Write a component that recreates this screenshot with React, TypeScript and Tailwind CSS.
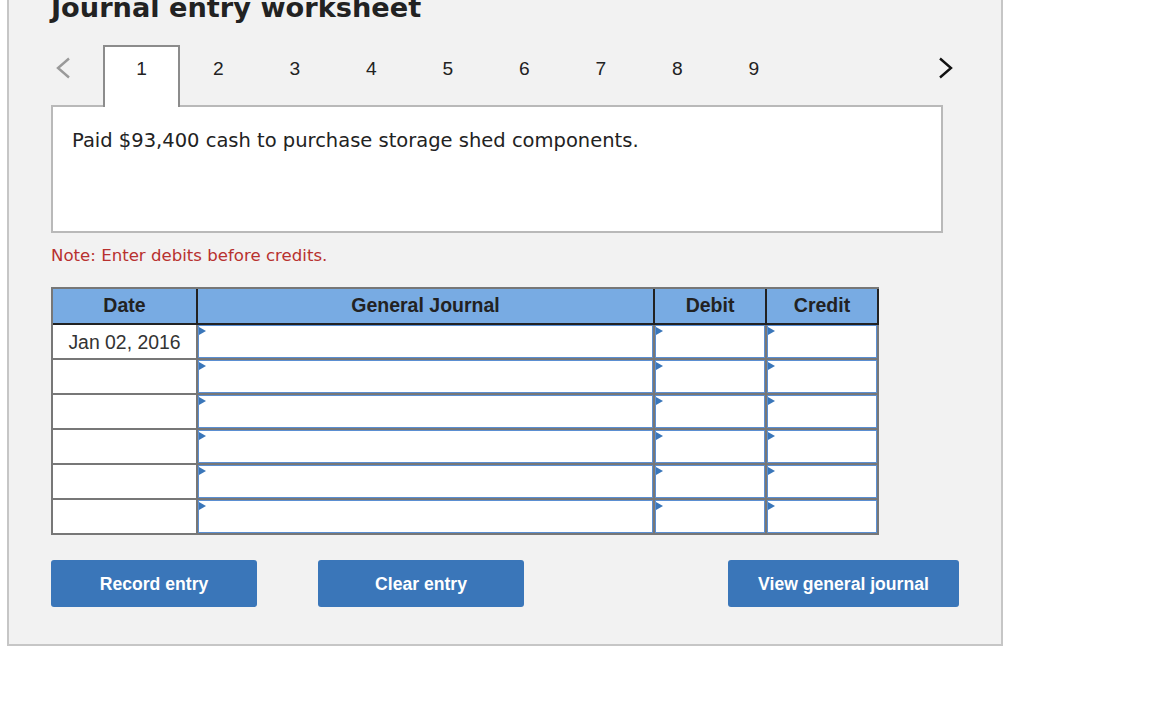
import React from "react";

const tabs = ["1", "2", "3", "4", "5", "6", "7", "8", "9"];
const rows = ["Jan 02, 2016", "", "", "", "", ""];

function Chevron({ dir, color }: { dir: "left" | "right"; color: string }) {
  return (
    <svg width="16" height="22" viewBox="0 0 16 22" fill="none">
      {dir === "left" ? (
        <path d="M14 1.5 L3 11 L14 20.5" stroke={color} strokeWidth="2.4" />
      ) : (
        <path d="M2 1.5 L13 11 L2 20.5" stroke={color} strokeWidth="2.4" />
      )}
    </svg>
  );
}

function InputCell({ width }: { width: string }) {
  return (
    <div className={`${width} h-full border-r-2 border-b-2 border-[#777] p-0`}>
      <div className="relative h-full w-full border border-[#5b8fd2] bg-white">
        <span className="absolute left-0 top-[1px] h-0 w-0 border-y-[4.5px] border-l-[7px] border-y-transparent border-l-[#3a76b9]" />
      </div>
    </div>
  );
}

export default function App() {
  return (
    <div className="min-h-[717px] bg-white pl-[7px]">
      <div className="-mt-[10px] w-[996px] border-2 border-[#c6c6c6] bg-[#f2f2f2] pb-[37px] pl-[42px]">
        <h2 className="text-[27.2px] font-bold leading-[32px] text-[#222] [font-family:'DejaVu_Sans',Verdana,sans-serif]">
          Journal entry worksheet
        </h2>

        <div className="mt-[21px] flex h-[60px] w-[905px] items-start [font-family:'Liberation_Sans',Arial,sans-serif]">
          <div className="w-[52px] pl-[4px] pt-[12px]">
            <Chevron dir="left" color="#9a9a9a" />
          </div>
          {tabs.map((t, i) =>
            i === 0 ? (
              <div
                key={t}
                className="relative z-10 h-[62px] w-[77px] border-2 border-b-0 border-[#8c8c8c] bg-white pt-[11px] text-center text-[19.2px] leading-[22px] text-[#222]"
              >
                {t}
              </div>
            ) : (
              <div
                key={t}
                className="w-[76.5px] pt-[13px] text-center text-[19.2px] leading-[22px] text-[#222]"
              >
                {t}
              </div>
            )
          )}
          <div className="ml-auto pr-[2px] pt-[12px]">
            <Chevron dir="right" color="#111" />
          </div>
        </div>

        <div className="h-[128px] w-[892px] border-2 border-[#b9b9b9] bg-white pl-[19px] pt-[22px] text-[19.5px] leading-[24px] text-[#222] [font-family:'DejaVu_Sans',Verdana,sans-serif]">
          Paid $93,400 cash to purchase storage shed components.
        </div>

        <p className="mt-[13px] text-[16.6px] leading-[20px] text-[#b8312f] [font-family:'DejaVu_Sans',Verdana,sans-serif]">
          Note: Enter debits before credits.
        </p>

        <div className="mt-[21px] w-[828px] border-l-2 border-t-2 border-[#777] [font-family:'Liberation_Sans',Arial,sans-serif]">
          <div className="flex h-[36px] bg-[#78abe3] text-[19.5px] font-bold text-[#222]">
            <div className="flex w-[145px] items-center justify-center border-b-2 border-r-2 border-[#222]">Date</div>
            <div className="flex w-[457px] items-center justify-center border-b-2 border-r-2 border-[#222]">General Journal</div>
            <div className="flex w-[112px] items-center justify-center border-b-2 border-r-2 border-[#222]">Debit</div>
            <div className="flex w-[112px] items-center justify-center border-b-2 border-r-2 border-[#222]">Credit</div>
          </div>
          {rows.map((d, i) => (
            <div key={i} className="flex h-[35px]">
              <div className="flex w-[145px] items-center justify-center border-b-2 border-r-2 border-[#777] bg-white pt-[3px] text-[19.4px] text-[#333]">
                {d}
              </div>
              <InputCell width="w-[457px]" />
              <InputCell width="w-[112px]" />
              <InputCell width="w-[112px]" />
            </div>
          ))}
        </div>

        <div className="mt-[25px] flex text-[17.6px] font-bold text-white [font-family:'Liberation_Sans',Arial,sans-serif]">
          <button className="h-[47px] w-[206px] rounded-[3px] bg-[#3a76b9] pt-px">Record entry</button>
          <button className="ml-[61px] h-[47px] w-[206px] rounded-[3px] bg-[#3a76b9] pt-px">Clear entry</button>
          <button className="ml-[204px] h-[47px] w-[231px] rounded-[3px] bg-[#3a76b9] pt-px">View general journal</button>
        </div>
      </div>
    </div>
  );
}
